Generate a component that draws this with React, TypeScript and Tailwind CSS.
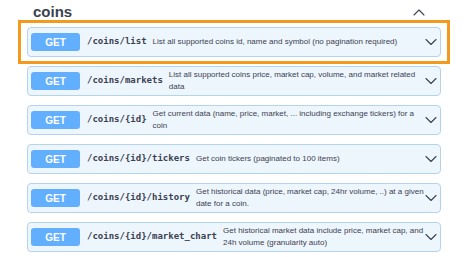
import React from 'react';

type Endpoint = {
  path: string;
  summary: string;
  active?: boolean;
};

const endpoints: Endpoint[] = [
  { path: '/coins/list', summary: 'List all supported coins id, name and symbol (no pagination required)', active: true },
  { path: '/coins/markets', summary: 'List all supported coins price, market cap, volume, and market related data' },
  { path: '/coins/{id}', summary: 'Get current data (name, price, market, ... including exchange tickers) for a coin' },
  { path: '/coins/{id}/tickers', summary: 'Get coin tickers (paginated to 100 items)' },
  { path: '/coins/{id}/history', summary: 'Get historical data (price, market cap, 24hr volume, ..) at a given date for a coin.' },
  { path: '/coins/{id}/market_chart', summary: 'Get historical market data include price, market cap, and 24h volume (granularity auto)' },
];

const Chevron = ({ up = false }: { up?: boolean }) => (
  <svg width="12" height="8" viewBox="0 0 12 8" fill="none" className="shrink-0">
    <path
      d={up ? 'M1 7 L6 2 L11 7' : 'M1 1.5 L6 6.5 L11 1.5'}
      stroke="#3b4151"
      strokeWidth="1.1"
      strokeLinecap="round"
      strokeLinejoin="round"
    />
  </svg>
);

const EndpointRow = ({ item }: { item: Endpoint }) => {
  return (
    <div className="flex h-[30px] items-center rounded-[4px] border border-[#b3d3ef] bg-[#eef6fd] pl-[3px] pr-[3px]">
      <div className="flex h-[18px] w-[49px] shrink-0 items-center justify-center rounded-[3px] bg-[#61affe] text-[10px] font-bold text-white">
        GET
      </div>
      <span className="ml-[7px] shrink-0 font-['DejaVu_Sans_Mono',monospace] text-[9px] font-bold text-[#3b4151]">
        {item.path}
      </span>
      <span className="ml-[6px] flex-1 text-[8px] leading-[12px] text-[#3b4151]">{item.summary}</span>
      <Chevron />
    </div>
  );
};

export default function App() {
  return (
    <div className="h-[257px] w-[474px] overflow-hidden bg-white font-['Liberation_Sans',Arial,sans-serif]">
      <div className="flex h-[27px] items-start justify-between pl-[33px] pr-[49px]">
        <h3 className="mt-[2px] text-[15px] font-bold leading-[20px] text-[#3b4151]">coins</h3>
        <div className="mt-[8px]">
          <Chevron up />
        </div>
      </div>
      <div className="flex flex-col gap-[9px] pl-[27px] pr-[33px]">
        {endpoints.map((item) =>
          item.active ? (
            <div key={item.path} className="-mx-[9px] -my-[7px] border-[3px] border-[#f39a1e] px-[6px] py-[4px]">
              <EndpointRow item={item} />
            </div>
          ) : (
            <EndpointRow key={item.path} item={item} />
          )
        )}
      </div>
    </div>
  );
}
